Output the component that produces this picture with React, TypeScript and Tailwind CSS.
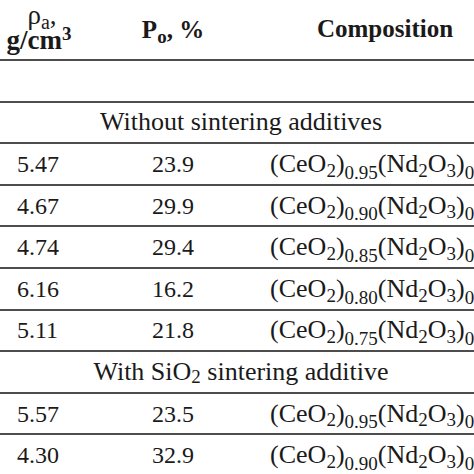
const rowsA = [
  { rho: "5.47", p: "23.9", x: "0.95" },
  { rho: "4.67", p: "29.9", x: "0.90" },
  { rho: "4.74", p: "29.4", x: "0.85" },
  { rho: "6.16", p: "16.2", x: "0.80" },
  { rho: "5.11", p: "21.8", x: "0.75" },
];

const rowsB = [
  { rho: "5.57", p: "23.5", x: "0.95" },
  { rho: "4.30", p: "32.9", x: "0.90" },
];

const rest = (x: string) => (1 - parseFloat(x)).toFixed(2);

const Rule = () => <div className="h-[2px] w-full bg-[#4d4d4d]" />;

const Formula = ({ x }: { x: string }) => (
  <span className="whitespace-nowrap text-[26px]">
    (CeO<sub className="text-[19px]">2</sub>)
    <sub className="text-[19px] align-[-2px]">{x}</sub>
    (Nd<sub className="text-[19px]">2</sub>O
    <sub className="text-[19px]">3</sub>)
    <sub className="text-[19px] align-[-2px]">{rest(x)}</sub>
  </span>
);

const DataRow = ({ rho, p, x }: { rho: string; p: string; x: string }) => (
  <div className="flex h-[39.6px] items-center">
    <div className="w-[120px] pl-[17px]">{rho}</div>
    <div className="w-[106px] text-center">{p}</div>
    <div className="w-[318px] text-center pr-[2px]">
      <Formula x={x} />
    </div>
  </div>
);

const GroupRow = ({ children }: { children: React.ReactNode }) => (
  <div className="flex h-[39.6px] items-center justify-center pr-[62px] whitespace-nowrap text-[26px]">
    {children}
  </div>
);

export default function App() {
  return (
    <div className="w-[474px] h-[474px] overflow-hidden bg-white text-[#1a1a1a] text-[24px] leading-none font-['Liberation_Serif',serif]">
      <div className="w-[544px]">
        <div className="flex h-[59px] items-center font-bold">
          <div className="w-[120px]">
            <div className="flex w-[78px] flex-col items-center gap-[3px] pb-[2px]">
              <div className="font-normal text-[27px] leading-[20px] pl-[6px]">
                ρ<sub className="text-[20px]">a</sub>,
              </div>
              <div className="text-[27px] leading-[24px]">
                g/cm<sup className="text-[19px]">3</sup>
              </div>
            </div>
          </div>
          <div className="w-[106px] text-center text-[25px]">
            P<sub className="text-[19px]">o</sub>, %
          </div>
          <div className="w-[318px] text-center text-[25px] pb-[2px]">Composition</div>
        </div>
        <Rule />
        <div className="h-[39.6px]" />
        <Rule />
        <GroupRow>Without sintering additives</GroupRow>
        {rowsA.map((r) => (
          <div key={r.rho}>
            <Rule />
            <DataRow {...r} />
          </div>
        ))}
        <Rule />
        <GroupRow>
          With SiO<sub className="text-[19px] align-[-2px]">2</sub>&nbsp;sintering additive
        </GroupRow>
        {rowsB.map((r) => (
          <div key={r.rho}>
            <Rule />
            <DataRow {...r} />
          </div>
        ))}
      </div>
    </div>
  );
}
